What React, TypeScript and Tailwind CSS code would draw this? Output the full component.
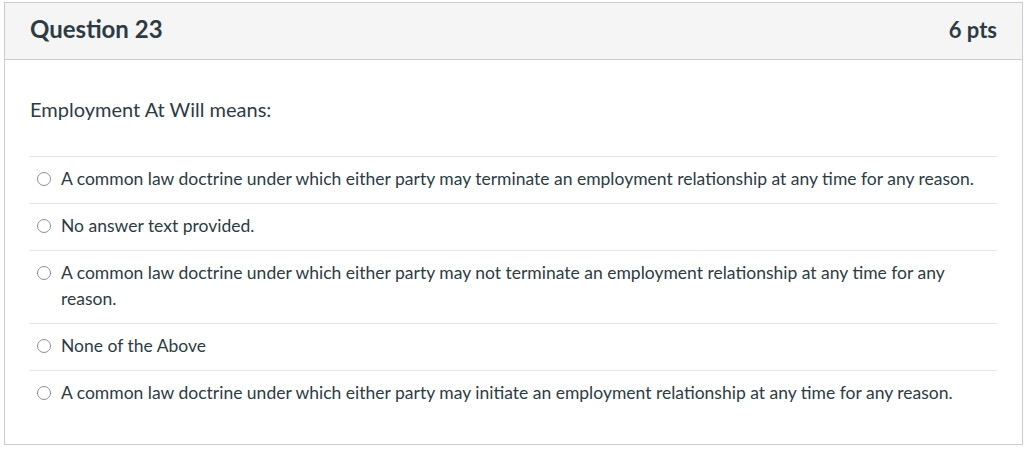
const answers = [
  "A common law doctrine under which either party may terminate an employment relationship at any time for any reason.",
  "No answer text provided.",
  "A common law doctrine under which either party may not terminate an employment relationship at any time for any reason.",
  "None of the Above",
  "A common law doctrine under which either party may initiate an employment relationship at any time for any reason.",
];

export default function App() {
  return (
    <div className="bg-white w-[1029px] h-[449px] pt-[2px] pl-[4px] font-['Lato','Liberation_Sans',sans-serif] text-[#2d3b45]">
      <div className="w-[1019px] border border-[#c7cdd1]">
        <div className="h-[57px] bg-[#f5f5f5] border-b border-[#c7cdd1] flex items-center justify-between px-[25px] pb-[4px]">
          <h2 className="text-[24px] font-bold">Question 23</h2>
          <span className="text-[22px] font-bold">6 pts</span>
        </div>
        <div className="px-[25px] pt-[36px] pb-[27px]">
          <p className="text-[20px] leading-[26px] mb-[34px]">Employment At Will means:</p>
          <div>
            {answers.map((a, i) => (
              <label key={i} className="flex items-start border-t border-[#e3e6e8] pt-[9px] pb-[11px] pr-[10px]">
                <span className="mt-[6px] ml-[7px] mr-[10px] w-[14px] h-[14px] rounded-full border border-[#8a9094] shrink-0 bg-white"></span>
                <span className="text-[17.5px] leading-[26px]">{a}</span>
              </label>
            ))}
          </div>
        </div>
      </div>
    </div>
  );
}
